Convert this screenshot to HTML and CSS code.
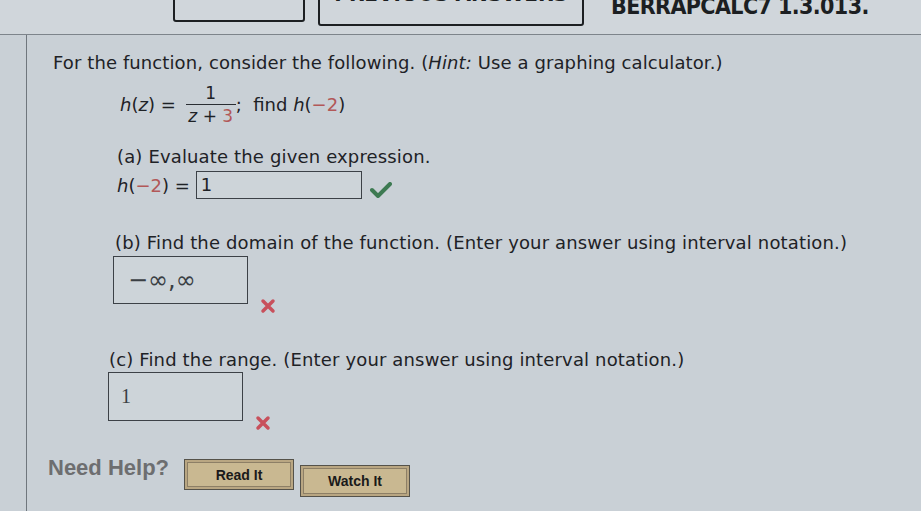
FILE: index.html
```html
<!DOCTYPE html>
<html>
<head>
<meta charset="utf-8">
<link rel="stylesheet" href="styles.css">
</head>
<body>
<div class="top">
  <div class="tbtn b1">DETAILS</div>
  <div class="tbtn b2">PREVIOUS ANSWERS</div>
  <div class="ref">BERRAPCALC7 1.3.013.</div>
</div>
<div class="main">
  <div class="gutter"></div>
  <div class="content">
    <p class="intro">For the function, consider the following. (<i>Hint:</i> Use a graphing calculator.)</p>
    <div class="formula">
      <span><i>h</i>(<i>z</i>) = </span>
      <span class="frac"><span class="num">1</span><span class="den"><i>z</i> + <span class="red">3</span></span></span>
      <span class="after">;&nbsp; find <i>h</i>(<span class="red">−2</span>)</span>
    </div>
    <p class="part pa">(a) Evaluate the given expression.</p>
    <div class="ansrow">
      <span><i>h</i>(<span class="red">−2</span>) = </span>
      <span class="box boxa">1</span>
      <svg class="check" width="22" height="16" viewBox="0 0 22 16"><path d="M2 8 L8 14 L20 2" fill="none" stroke="#3d7a52" stroke-width="4" stroke-linejoin="round" stroke-linecap="round"/></svg>
    </div>
    <p class="part pb">(b) Find the domain of the function. (Enter your answer using interval notation.)</p>
    <div class="ansrow2 rb">
      <span class="box boxb">−∞,∞</span>
      <svg class="cross" width="16" height="16" viewBox="0 0 16 16"><path d="M3 3 L13 13 M13 3 L3 13" stroke="#c8505c" stroke-width="3.5" stroke-linecap="round"/></svg>
    </div>
    <p class="part pc">(c) Find the range. (Enter your answer using interval notation.)</p>
    <div class="ansrow2 rc">
      <span class="box boxc">1</span>
      <svg class="cross" width="16" height="16" viewBox="0 0 16 16"><path d="M3 3 L13 13 M13 3 L3 13" stroke="#c8505c" stroke-width="3.5" stroke-linecap="round"/></svg>
    </div>
    <div class="help">
      <span class="need">Need Help?</span>
      <span class="hbtn">Read It</span>
      <span class="hbtn h2">Watch It</span>
    </div>
  </div>
</div>
</body>
</html>
```
FILE: styles.css
```css
html, body { margin: 0; padding: 0; }
body {
  width: 921px; height: 511px; overflow: hidden;
  background: #c9d0d6;
  font-family: "DejaVu Sans", Verdana, sans-serif;
  color: #1e2226;
}
.top {
  height: 34px;
  background: #d0d6db;
  border-bottom: 1px solid #7d848b;
  display: flex;
  align-items: flex-start;
  overflow: hidden;
  white-space: nowrap;
}
.tbtn {
  flex: none;
  margin-top: -22px;
  height: 44px;
  border: 2px solid #1c1f22;
  border-radius: 3px;
  font-size: 20px;
  font-weight: bold;
  display: flex; align-items: flex-end; justify-content: center;
  line-height: 20px;
  color: #1c1f22;
  box-sizing: border-box;
  padding-bottom: 17px;
}
.b1 { margin-left: 173px; width: 132px; }
.b2 { margin-left: 13px; width: 266px; height: 48px; padding-bottom: 20px; }
.ref {
  flex: none;
  margin-left: 27px; margin-top: -8px;
  font-family: "DejaVu Sans Condensed", "DejaVu Sans", sans-serif;
  font-size: 23px; font-weight: bold; color: #1c1f22;
  letter-spacing: -0.6px;
  line-height: 28px;
}
.main { display: flex; height: 476px; }
.gutter { width: 26px; border-right: 1px solid #6f767d; flex: none; }
.content { padding-left: 26px; font-size: 18px; white-space: nowrap; }
p { margin: 0; }
.intro { margin-top: 17px; line-height: 22px; letter-spacing: 0.1px; }
.formula {
  display: flex; align-items: center;
  margin-left: 67px; margin-top: 8px; line-height: 22px;
}
.frac { display: inline-flex; flex-direction: column; align-items: center; margin-left: 10px; }
.num { padding: 0 3px; border-bottom: 1px solid #2a2e33; line-height: 22px; font-size: 17px; width: 44px; text-align: center; }
.den { line-height: 22px; font-size: 17px; padding: 0 2px; }
.red { color: #b25858; }
.part { line-height: 22px; letter-spacing: 0.15px; }
.pa { margin-left: 64px; margin-top: 19px; }
.ansrow { display: flex; align-items: center; margin-left: 64px; margin-top: 3px; }
.box {
  background: #cdd4d9;
  border: 1px solid #3c4147;
  box-sizing: border-box;
}
.boxa { width: 166px; height: 28px; margin-left: 6px; padding-left: 4px; line-height: 25px; font-size: 18px; }
.check { margin-left: 8px; margin-top: 10px; }
.pb { margin-left: 62px; margin-top: 33px; }
.ansrow2 { display: flex; align-items: flex-end; }
.rb { margin-left: 60px; margin-top: 2px; }
.boxb { width: 135px; height: 48px; padding-left: 14px; line-height: 46px; font-size: 24px; color: #3a3f44; }
.cross { margin-left: 12px; margin-bottom: -10px; }
.pc { margin-left: 56px; margin-top: 45px; }
.rc { margin-left: 55px; margin-top: 1px; }
.boxc { width: 135px; height: 49px; padding-left: 12px; line-height: 46px; font-size: 20px; font-family: "Liberation Serif", serif; color: #3a3f44; }
.help { display: flex; align-items: flex-start; margin-left: -5px; margin-top: 38px; }
.need { font-family: "Liberation Sans", Arial, sans-serif; font-weight: bold; font-size: 22px; line-height: 25px; margin-top: -4px; color: #6d6e70; }
.hbtn {
  margin-left: 15px;
  width: 110px; height: 31px; box-sizing: border-box;
  background: #c9b891;
  border: 1px solid #55524a;
  box-shadow: inset 0 0 0 2px #b9a682, inset 0 0 0 3px #8d7f66;
  font-family: "Liberation Sans", Arial, sans-serif; font-weight: bold; font-size: 14px;
  display: flex; align-items: center; justify-content: center; color: #1a1a1a;
}
.h2 { margin-left: 6px; margin-top: 6px; height: 32px; }
```
